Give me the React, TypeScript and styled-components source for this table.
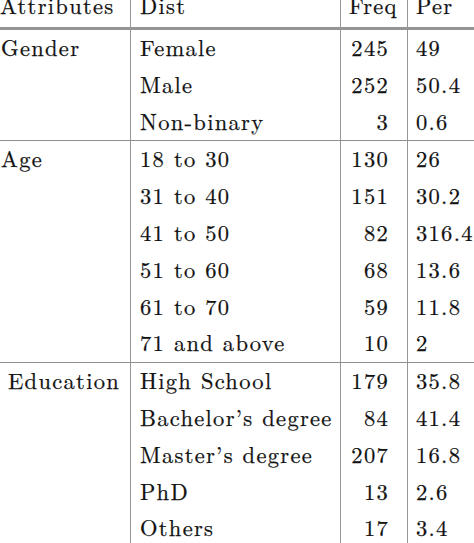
import React from "react";
import styled, { createGlobalStyle } from "styled-components";

const GlobalStyle = createGlobalStyle`
  html, body {
    margin: 0;
    padding: 0;
    background: #ffffff;
    overflow: hidden;
  }
`;

const Sheet = styled.div`
  width: 474px;
  margin-top: -9.8px;
  font-family: "Latin Modern Roman", "Liberation Serif", serif;
  font-size: 22.5px;
  letter-spacing: 1.3px;
  color: #111111;
  -webkit-text-stroke: 0.25px #111111;
`;

const Row = styled.div`
  display: grid;
  grid-template-columns: 131px 210px 67px 1fr;
`;

const HeaderRow = styled(Row)`
  border-bottom: 3px solid #959595;
`;

const Section = styled.div<{ $last?: boolean }>`
  border-bottom: ${(p) => (p.$last ? "none" : "1px solid #8f8f8f")};
`;

const Cell = styled.div<{ $align?: "left" | "right"; $pl?: number; $pr?: number; $divider?: boolean }>`
  box-sizing: border-box;
  height: 36.8px;
  line-height: 34.4px;
  padding-bottom: 2.4px;
  padding-left: ${(p) => p.$pl ?? 0}px;
  padding-right: ${(p) => p.$pr ?? 0}px;
  text-align: ${(p) => p.$align ?? "left"};
  white-space: nowrap;
  overflow: hidden;
  border-right: ${(p) => (p.$divider ? "1px solid #969696" : "none")};
`;

const HeadCell = styled(Cell)`
  line-height: 31.4px;
  padding-bottom: 5.4px;
`;

type Item = { dist: string; freq: string; per: string };
type Group = { attr: string; indent: number; items: Item[] };

const groups: Group[] = [
  {
    attr: "Gender",
    indent: 1,
    items: [
      { dist: "Female", freq: "245", per: "49" },
      { dist: "Male", freq: "252", per: "50.4" },
      { dist: "Non-binary", freq: "3", per: "0.6" },
    ],
  },
  {
    attr: "Age",
    indent: 1,
    items: [
      { dist: "18 to 30", freq: "130", per: "26" },
      { dist: "31 to 40", freq: "151", per: "30.2" },
      { dist: "41 to 50", freq: "82", per: "316.4" },
      { dist: "51 to 60", freq: "68", per: "13.6" },
      { dist: "61 to 70", freq: "59", per: "11.8" },
      { dist: "71 and above", freq: "10", per: "2" },
    ],
  },
  {
    attr: "Education",
    indent: 8,
    items: [
      { dist: "High School", freq: "179", per: "35.8" },
      { dist: "Bachelor’s degree", freq: "84", per: "41.4" },
      { dist: "Master’s degree", freq: "207", per: "16.8" },
      { dist: "PhD", freq: "13", per: "2.6" },
      { dist: "Others", freq: "17", per: "3.4" },
    ],
  },
];

export default function App() {
  return (
    <>
      <GlobalStyle />
      <Sheet>
        <HeaderRow>
          <HeadCell $divider $pl={0}>Attributes</HeadCell>
          <HeadCell $divider $pl={9}>Dist</HeadCell>
          <HeadCell $divider $pl={8}>Freq</HeadCell>
          <HeadCell $pl={8}>Per</HeadCell>
        </HeaderRow>
        {groups.map((g, gi) => (
          <Section key={g.attr} $last={gi === groups.length - 1}>
            {g.items.map((it, i) => (
              <Row key={it.dist}>
                <Cell $divider $pl={g.indent}>{i === 0 ? g.attr : ""}</Cell>
                <Cell $divider $pl={9}>{it.dist}</Cell>
                <Cell $divider $align="right" $pr={18}>{it.freq}</Cell>
                <Cell $pl={8}>{it.per}</Cell>
              </Row>
            ))}
          </Section>
        ))}
      </Sheet>
    </>
  );
}
